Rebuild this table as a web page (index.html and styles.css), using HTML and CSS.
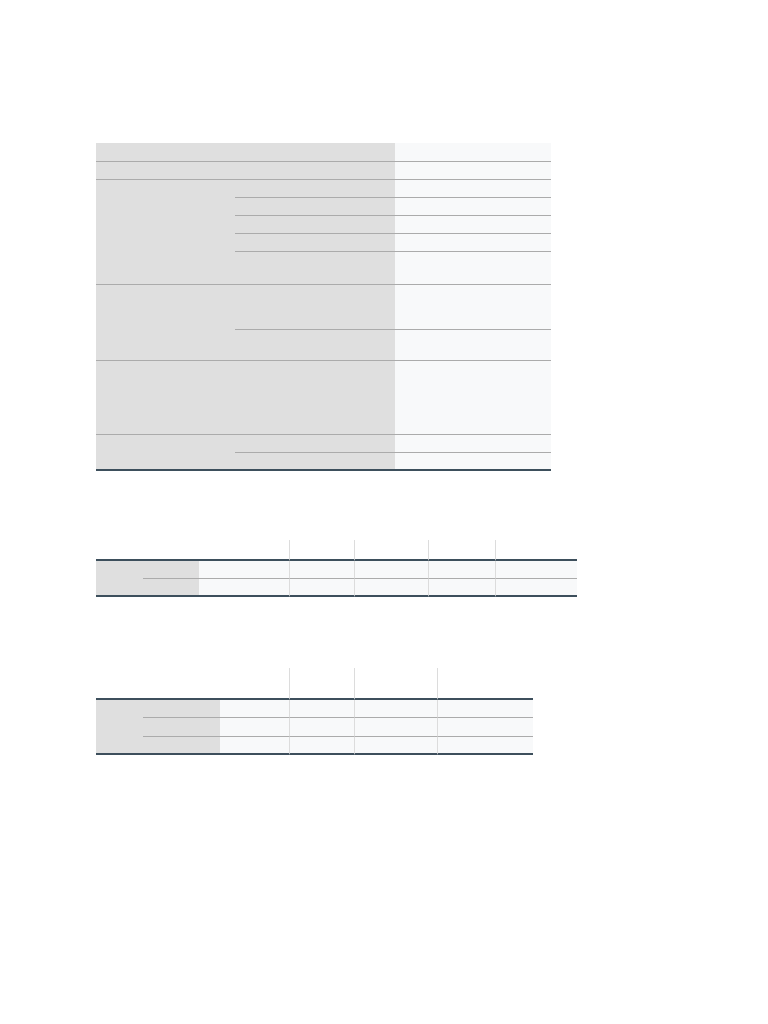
FILE: index.html
```html
<!DOCTYPE html>
<html lang="en">
<head>
<meta charset="utf-8">
<title>Tables</title>
<link rel="stylesheet" href="styles.css">
</head>
<body>
<div class="page">
  <div class="tbl t1">
    <div class="c g cs2 b"></div><div class="c l b"></div>
    <div class="c g cs2 b"></div><div class="c l b"></div>

    <div class="c g rs5 b"></div>
    <div class="c g b"></div><div class="c l b"></div>
    <div class="c g b"></div><div class="c l b"></div>
    <div class="c g b"></div><div class="c l b"></div>
    <div class="c g b"></div><div class="c l b"></div>
    <div class="c g b"></div><div class="c l b"></div>

    <div class="c g rs2 b"></div>
    <div class="c g b"></div><div class="c l b"></div>
    <div class="c g b"></div><div class="c l b"></div>

    <div class="c g cs2 b"></div><div class="c l b"></div>

    <div class="c g rs2 d"></div>
    <div class="c g b"></div><div class="c l b"></div>
    <div class="c g d"></div><div class="c l d"></div>
  </div>

  <div class="tbl t2">
    <div class="c cs3 d"></div>
    <div class="c d v"></div><div class="c d v"></div><div class="c d v"></div><div class="c d v"></div>

    <div class="c g rs2 d"></div>
    <div class="c g b"></div><div class="c l b"></div>
    <div class="c l b v"></div><div class="c l b v"></div><div class="c l b v"></div><div class="c l b v"></div>
    <div class="c g d"></div><div class="c l d"></div>
    <div class="c l d v"></div><div class="c l d v"></div><div class="c l d v"></div><div class="c l d v"></div>
  </div>

  <div class="tbl t3">
    <div class="c cs3 d"></div>
    <div class="c d v"></div><div class="c d v"></div><div class="c d v"></div>

    <div class="c g rs3 d"></div>
    <div class="c g b"></div><div class="c l b"></div>
    <div class="c l b v"></div><div class="c l b v"></div><div class="c l b v"></div>
    <div class="c g b"></div><div class="c l b"></div>
    <div class="c l b v"></div><div class="c l b v"></div><div class="c l b v"></div>
    <div class="c g d"></div><div class="c l d"></div>
    <div class="c l d v"></div><div class="c l d v"></div><div class="c l d v"></div>
  </div>
</div>
</body>
</html>
```

FILE: styles.css
```css
html, body {
  margin: 0;
  padding: 0;
  background: #ffffff;
  font-family: "Liberation Sans", Arial, sans-serif;
}

.page {
  display: flex;
  flex-direction: column;
  align-items: flex-start;
  padding: 143px 0 0 96px;
}

.tbl {
  display: grid;
}

.t1 {
  grid-template-columns: 139px 160px 156px;
  grid-template-rows: 19px 18px 18px 18px 18px 18px 33px 45px 31px 74px 18px 18px;
}

.t2 {
  margin-top: 69px;
  grid-template-columns: 47px 56px 90px 65px 74px 67px 82px;
  grid-template-rows: 21px 18px 18px;
}

.t3 {
  margin-top: 71px;
  grid-template-columns: 47px 77px 69px 65px 83px 96px;
  grid-template-rows: 32px 18px 19px 18px;
}

.c {
  box-sizing: border-box;
}

.g {
  background: #dfdfdf;
}

.l {
  background: #f8f9fa;
}

.b {
  border-bottom: 1px solid #ababab;
}

.d {
  border-bottom: 2px solid #3d4f5c;
}

.v {
  border-left: 1px solid #dcdcdc;
}

.cs2 {
  grid-column: span 2;
}

.cs3 {
  grid-column: span 3;
}

.rs2 {
  grid-row: span 2;
}

.rs3 {
  grid-row: span 3;
}

.rs5 {
  grid-row: span 5;
}
```
